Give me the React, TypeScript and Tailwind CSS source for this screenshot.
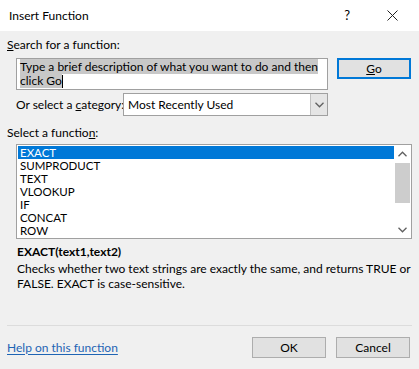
import React from "react";

const functions = ["EXACT", "SUMPRODUCT", "TEXT", "VLOOKUP", "IF", "CONCAT", "ROW"];

function Chevron({ up = false }: { up?: boolean }) {
  return (
    <svg width="9" height="6" viewBox="0 0 9 6" className={up ? "rotate-180" : ""}>
      <path d="M0.5 0.8 L4.5 4.8 L8.5 0.8" fill="none" stroke="#606060" strokeWidth="1.3" />
    </svg>
  );
}

export default function App() {
  return (
    <div
      className="w-[419px] h-[369px] bg-[#f0f0f0] flex flex-col text-[12px] text-black overflow-hidden"
      style={{ fontFamily: 'Lato, "Noto Sans", sans-serif' }}
    >
      {/* title bar */}
      <div className="h-[31px] bg-white flex items-center pl-[9px]">
        <span className="text-[12px]">Insert Function</span>
        <span className="ml-auto text-[13px] mr-[37px]">?</span>
        <svg width="11" height="11" viewBox="0 0 11 11" className="mr-[21px]">
          <path d="M0.5 0.5 L10.5 10.5 M10.5 0.5 L0.5 10.5" stroke="#222" strokeWidth="1" />
        </svg>
      </div>

      <div className="px-[7px] flex flex-col">
        <div className="mt-[6px] h-[16px] leading-[16px]">
          <u>S</u>earch for a function:
        </div>

        <div className="mt-[5px] ml-[9px] flex">
          <div className="w-[312px] h-[32px] bg-white border border-[#a0a0a0] px-[3px] pt-[1px] leading-[14px] whitespace-nowrap">
            <span className="bg-[#c8c8c8]">Type a brief description of what you want to do and then</span>
            <br />
            <span className="bg-[#c8c8c8]">click Go</span>
            <span className="inline-block w-px h-[13px] bg-black align-middle" />
          </div>
          <button className="ml-[9px] w-[74px] h-[21px] bg-[#e1e1e1] border-2 border-[#0078d7] flex items-center justify-center">
            <span>
              <u>G</u>o
            </span>
          </button>
        </div>

        <div className="mt-[3px] ml-[9px] flex items-center h-[23px]">
          <span className="w-[107px] whitespace-nowrap">
            Or select a <u>c</u>ategory:
          </span>
          <div className="w-[205px] h-[23px] bg-white border border-[#a0a0a0] flex items-center">
            <span className="pl-[4px]">Most Recently Used</span>
            <div className="ml-auto w-[17px] h-full bg-[#e5e5e5] border-l border-[#c0c0c0] flex items-center justify-center">
              <Chevron />
            </div>
          </div>
        </div>

        <div className="mt-[9px] h-[16px] leading-[16px]">
          Select a functio<u>n</u>:
        </div>

        <div className="mt-[3px] ml-[9px] w-[396px] h-[95px] bg-white border border-[#a0a0a0] flex">
          <div className="flex-1 pt-[1px] pl-[1px] text-[11.5px]">
            {functions.map((f, i) => (
              <div
                key={f}
                className={`h-[13px] leading-[13px] pl-[2px] ${i === 0 ? "bg-[#0078d7] text-white" : ""}`}
              >
                {f}
              </div>
            ))}
          </div>
          <div className="w-[17px] flex flex-col items-center">
            <div className="h-[17px] flex items-center justify-center">
              <Chevron up />
            </div>
            <div className="mt-[1px] w-[15px] h-[40px] bg-[#cdcdcd]" />
            <div className="mt-auto h-[17px] flex items-center justify-center">
              <Chevron />
            </div>
          </div>
        </div>

        <div className="mt-[5px] ml-[10px] font-bold h-[15px] leading-[15px]">EXACT(text1,text2)</div>
        <div className="ml-[10px] mt-[2px] leading-[15px] w-[400px]">
          Checks whether two text strings are exactly the same, and returns TRUE or
          <br />
          FALSE. EXACT is case-sensitive.
        </div>
      </div>

      <div className="mt-auto mx-[7px] border-t border-[#dcdcdc]" />
      <div className="h-[43px] px-[7px] flex items-center">
        <a className="text-[#1e64b4] underline underline-offset-2">Help on this function</a>
        <button className="ml-auto w-[74px] h-[21px] bg-[#e1e1e1] border border-[#adadad]">OK</button>
        <button className="ml-[10px] mr-[2px] w-[74px] h-[21px] bg-[#e1e1e1] border border-[#adadad]">Cancel</button>
      </div>
    </div>
  );
}
